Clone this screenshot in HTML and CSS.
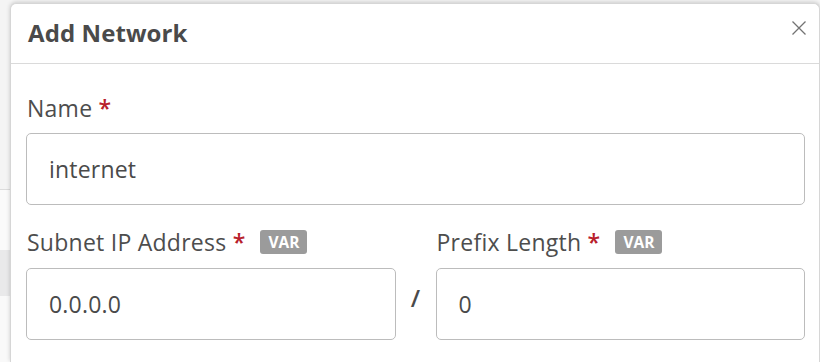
FILE: index.html
```html
<!DOCTYPE html>
<html>
<head>
<meta charset="utf-8">
<link rel="stylesheet" href="styles.css">
</head>
<body>
<div class="page">
  <div class="backdrop">
    <div class="bd-top"></div>
    <div class="bd-mid"></div>
    <div class="bd-block"></div>
    <div class="bd-bottom"></div>
  </div>
  <div class="modal">
    <div class="modal-header">
      <h2 class="modal-title">Add Network</h2>
      <button class="close" aria-label="Close">
        <svg width="16" height="16" viewBox="0 0 16 16"><path d="M1.5 1.5 L14.5 14.5 M14.5 1.5 L1.5 14.5" stroke="#737373" stroke-width="1.3" fill="none"/></svg>
      </button>
    </div>
    <div class="modal-body">
      <div class="field">
        <label class="label">Name <span class="req">*</span></label>
        <div class="input">internet</div>
      </div>
      <div class="split">
        <label class="label">Subnet IP Address <span class="req">*</span><span class="badge">VAR</span></label>
        <span></span>
        <label class="label">Prefix Length <span class="req">*</span><span class="badge">VAR</span></label>
        <div class="input">0.0.0.0</div>
        <div class="slash">/</div>
        <div class="input">0</div>
      </div>
    </div>
  </div>
</div>
</body>
</html>
```
FILE: styles.css
```css
html, body {
  margin: 0;
  padding: 0;
}
body {
  width: 820px;
  height: 362px;
  overflow: hidden;
  background: #f6f6f6;
  font-family: "Open Sans", "Liberation Sans", sans-serif;
  color: #4a4a4a;
}
.page {
  display: flex;
  height: 362px;
}
.backdrop {
  width: 10px;
  flex: none;
  display: flex;
  flex-direction: column;
}
.bd-top {
  height: 189px;
  background: #f4f4f4;
  border-bottom: 1px solid #dcdcdc;
}
.bd-mid {
  height: 60px;
  background: #fafafa;
}
.bd-block {
  height: 46px;
  background: #e9e9ea;
}
.bd-bottom {
  flex: 1;
  background: #f9f9f9;
}
.modal {
  margin-top: 3px;
  width: 808px;
  background: #fff;
  border: 1px solid #d6d6d6;
  border-bottom: none;
  border-radius: 6px 6px 0 0;
  box-shadow: 0 -1px 4px rgba(0, 0, 0, 0.18);
}
.modal-header {
  height: 59px;
  border-bottom: 1px solid #dadada;
  display: flex;
  align-items: center;
  justify-content: space-between;
  padding: 0 12px 0 17px;
}
.modal-title {
  margin: 0;
  font-size: 24px;
  font-weight: 700;
  color: #4a4a4a;
  line-height: 32px;
  margin-top: -1px;
  letter-spacing: 0.1px;
}
.close {
  border: none;
  background: none;
  padding: 0;
  width: 16px;
  height: 16px;
  margin-top: -12px;
  display: flex;
}
.modal-body {
  padding: 27px 14px 0 15px;
}
.field {
  display: flex;
  flex-direction: column;
}
.label {
  font-size: 23px;
  letter-spacing: 0.25px;
  line-height: 30px;
  padding-top: 2px;
  display: flex;
  align-items: center;
  white-space: pre;
  color: #4d4d4d;
  padding-left: 1px;
}
.req {
  color: #b8202b;
  font-weight: 600;
}
.badge {
  margin-left: 15px;
  background: #9b9b9b;
  color: #fff;
  font-size: 15.5px;
  letter-spacing: 0;
  font-weight: 700;
  line-height: 24px;
  height: 24px;
  padding: 0 8px;
  border-radius: 3px;
}
.input {
  margin-top: 10px;
  height: 70px;
  border: 1px solid #bcbcbc;
  border-radius: 5px;
  font-size: 23px;
  letter-spacing: 0.2px;
  line-height: 70px;
  padding: 0 22px;
  color: #4a4a4a;
}
.split {
  margin-top: 20px;
  display: grid;
  grid-template-columns: 1fr 40px 1fr;
  row-gap: 0;
}
.split .input {
  margin-top: 11px;
}
.slash {
  margin-top: 11px;
  font-size: 24px;
  line-height: 60px;
  text-align: center;
  color: #4a4a4a;
  font-weight: 600;
}
```
